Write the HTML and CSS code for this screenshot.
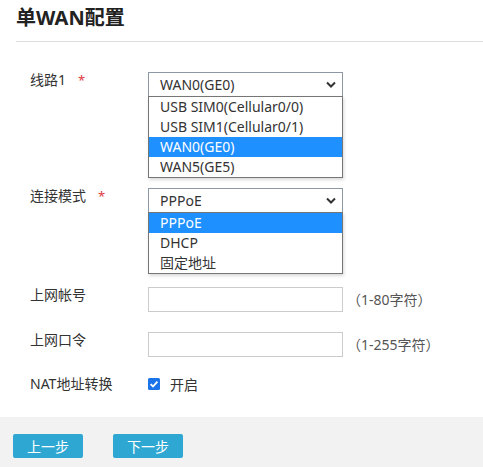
FILE: index.html
```html
<!DOCTYPE html>
<html lang="zh-CN">
<head>
  <meta charset="UTF-8" />
  <meta name="viewport" content="width=device-width, initial-scale=1.0" />
  <title>单WAN配置</title>
  <link rel="stylesheet" href="styles.css">
</head>
<body>
  <header class="page-head">
    <h1>单WAN配置</h1>
  </header>

  <main class="form">
    <div class="row row-first">
      <div class="label">线路1<span class="req">*</span></div>
      <div class="field">
        <div class="select">
          <span>WAN0(GE0)</span>
          <svg class="chev" width="10" height="7" viewBox="0 0 10 7"><path d="M1 1.5 L5 5.5 L9 1.5" fill="none" stroke="#333" stroke-width="2"/></svg>
        </div>
        <ul class="options">
          <li>USB SIM0(Cellular0/0)</li>
          <li>USB SIM1(Cellular0/1)</li>
          <li class="active">WAN0(GE0)</li>
          <li>WAN5(GE5)</li>
        </ul>
      </div>
    </div>

    <div class="row row-mode">
      <div class="label">连接模式<span class="req">*</span></div>
      <div class="field">
        <div class="select">
          <span>PPPoE</span>
          <svg class="chev" width="10" height="7" viewBox="0 0 10 7"><path d="M1 1.5 L5 5.5 L9 1.5" fill="none" stroke="#333" stroke-width="2"/></svg>
        </div>
        <ul class="options">
          <li class="active">PPPoE</li>
          <li>DHCP</li>
          <li>固定地址</li>
        </ul>
      </div>
    </div>

    <div class="row row-user">
      <div class="label">上网帐号</div>
      <div class="field"><input type="text" class="text"></div>
      <div class="hint">（1-80字符）</div>
    </div>

    <div class="row">
      <div class="label">上网口令</div>
      <div class="field"><input type="password" class="text"></div>
      <div class="hint">（1-255字符）</div>
    </div>

    <div class="row row-nat">
      <div class="label">NAT地址转换</div>
      <div class="check">
        <svg width="12" height="12" viewBox="0 0 12 12"><rect width="12" height="12" rx="1.5" fill="#1a73e8"/><path d="M2.6 6.2 L5 8.5 L9.4 3.6" fill="none" stroke="#fff" stroke-width="1.8"/></svg>
        <span>开启</span>
      </div>
    </div>
  </main>

  <footer class="actions">
    <button class="btn">上一步</button>
    <button class="btn">下一步</button>
  </footer>
</body>
</html>
```

FILE: styles.css
```css
body {
  margin: 0;
  font-family: "Noto Sans", "Noto Sans CJK SC", sans-serif;
  font-size: 14px;
  color: #333;
  background: #fff;
}
.page-head {
  padding: 6px 0 0 16px;
}
.page-head h1 {
  margin: 0;
  font-size: 20px;
  line-height: 24px;
  font-weight: bold;
  color: #222;
  padding-bottom: 11px;
  border-bottom: 1px solid #ddd;
}
.form {
  padding: 30px 0 0 30px;
  height: 375px;
  box-sizing: border-box;
}
.row {
  display: flex;
  align-items: flex-start;
  margin-bottom: 20px;
}
.row-first {
  margin-bottom: 10px;
}
.row-mode {
  margin-bottom: 13px;
}
.label {
  width: 118px;
  line-height: 16px;
}
.req {
  color: #e0393e;
  margin-left: 12px;
  font-size: 13px;
}
.field {
  width: 195px;
}
.select {
  height: 25px;
  box-sizing: border-box;
  border: 1px solid #8c98a4;
  display: flex;
  align-items: center;
  justify-content: space-between;
  padding: 0 6px 0 11px;
  line-height: 20px;
}
.options {
  list-style: none;
  margin: -1px 0 0;
  padding: 0;
  border: 1px solid #767676;
  box-shadow: 1px 2px 3px rgba(0,0,0,0.15);
  background: #fff;
}
.options li {
  height: 20px;
  line-height: 20px;
  padding-left: 11px;
  white-space: nowrap;
}
.options li.active {
  background: #1e90ff;
  color: #fff;
}
.text {
  display: block;
  width: 195px;
  height: 25px;
  box-sizing: border-box;
  border: 1px solid #ccc;
  margin: 0;
  padding: 0 6px;
  outline: none;
}
.hint {
  margin-left: 4px;
  line-height: 25px;
  color: #555;
}
.row-nat .label {
  line-height: 14px;
}
.check {
  display: flex;
  align-items: center;
  gap: 10px;
  height: 14px;
}
.actions {
  background: #f2f2f2;
  height: 50px;
  padding: 17px 0 0 13px;
  box-sizing: border-box;
  display: flex;
  gap: 30px;
  align-items: flex-start;
}
.btn {
  width: 70px;
  height: 24px;
  border: none;
  border-radius: 2px;
  background: #2ea8d2;
  color: #fff;
  font-family: "Noto Sans", "Noto Sans CJK SC", sans-serif;
  font-size: 14px;
  padding: 0;
}
```
